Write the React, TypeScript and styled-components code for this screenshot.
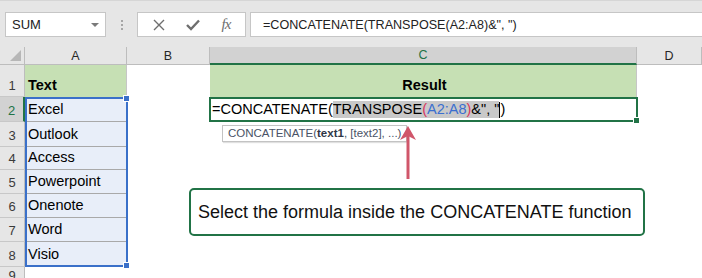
import React from "react";
import styled, { createGlobalStyle } from "styled-components";

const GlobalStyle = createGlobalStyle`
  html, body {
    margin: 0;
    padding: 0;
    background: #ffffff;
    overflow: hidden;
  }
`;

const Page = styled.div`
  position: relative;
  width: 702px;
  height: 278px;
  overflow: hidden;
  font-family: "Liberation Sans", Arial, sans-serif;
`;

const Toolbar = styled.div`
  height: 47px;
  box-sizing: border-box;
  padding-top: 11px;
  background: #e6e6e6;
  border-top: 1px solid #d6d6d6;
  display: flex;
  align-items: flex-start;
`;

const Box = styled.div`
  height: 25px;
  box-sizing: border-box;
  background: #ffffff;
  border: 1px solid #c6c6c6;
  display: flex;
  align-items: center;
`;

const NameBox = styled(Box)`
  margin-left: 5px;
  width: 101px;
  padding: 0 6px;
  justify-content: space-between;
  font-size: 13px;
  color: #222;
`;

const Caret = styled.span`
  width: 0;
  height: 0;
  border-left: 4px solid transparent;
  border-right: 4px solid transparent;
  border-top: 4px solid #7a7a7a;
`;

const Dots = styled.div`
  width: 31px;
  height: 25px;
  display: flex;
  flex-direction: column;
  align-items: center;
  justify-content: center;
  gap: 2px;

  span {
    width: 2px;
    height: 2px;
    background: #a6a6a6;
  }
`;

const FxGroup = styled(Box)`
  width: 109px;
  justify-content: space-around;
  padding: 0 4px;
`;

const FxText = styled.span`
  font-family: "Liberation Serif", "Times New Roman", serif;
  font-style: italic;
  font-size: 15px;
  color: #6e6e6e;
  letter-spacing: -1px;
`;

const FormulaBar = styled(Box)`
  margin-left: 4px;
  flex: 1;
  border-right: none;
  padding-left: 12px;
  font-size: 12.6px;
  color: #222;
`;

const Sheet = styled.div`
  display: grid;
  grid-template-columns: 25px 102px 83px 427px 65px;
  grid-template-rows: 18px 32px 25px 25px 23px 24px 24px 24px 25px 20px;
  position: relative;
`;

const Corner = styled.div`
  background: #e6e6e6;
  border-right: 1px solid #bdbdbd;
  border-bottom: 1px solid #bdbdbd;
  position: relative;

  &::after {
    content: "";
    position: absolute;
    right: 3px;
    bottom: 3px;
    width: 0;
    height: 0;
    border-left: 11px solid transparent;
    border-bottom: 11px solid #b7b7b7;
  }
`;

const ColHead = styled.div<{ $active?: boolean }>`
  background: ${(p) => (p.$active ? "#d2d2d2" : "#e6e6e6")};
  border-right: 1px solid #bdbdbd;
  border-bottom: ${(p) => (p.$active ? "2px solid #217346" : "1px solid #bdbdbd")};
  display: flex;
  align-items: center;
  justify-content: center;
  font-size: 12.5px;
  color: ${(p) => (p.$active ? "#217346" : "#262626")};
`;

const RowHead = styled.div<{ $active?: boolean }>`
  background: ${(p) => (p.$active ? "#d2d2d2" : "#e6e6e6")};
  border-right: ${(p) => (p.$active ? "2px solid #217346" : "1px solid #bdbdbd")};
  border-bottom: 1px solid #c8c8c8;
  display: flex;
  align-items: flex-end;
  justify-content: center;
  padding-bottom: 3px;
  box-sizing: border-box;
  font-size: 13px;
  color: ${(p) => (p.$active ? "#217346" : "#3a3a3a")};
`;

const Cell = styled.div<{
  $fill?: string;
  $bold?: boolean;
  $center?: boolean;
  $line?: string;
  $side?: string;
}>`
  background: ${(p) => p.$fill || "#ffffff"};
  border-bottom: ${(p) => (p.$line ? `1px solid ${p.$line}` : "none")};
  border-right: ${(p) => (p.$side ? `1px solid ${p.$side}` : "none")};
  box-sizing: border-box;
  display: flex;
  align-items: flex-end;
  justify-content: ${(p) => (p.$center ? "center" : "flex-start")};
  padding: 0 0 3px 3px;
  font-size: 14.5px;
  line-height: 17px;
  font-weight: ${(p) => (p.$bold ? 700 : 400)};
  color: #000;
  white-space: nowrap;
`;

const ActiveCell = styled.div`
  border: 2px solid #217346;
  box-sizing: border-box;
  margin-left: -1px;
  margin-right: -1px;
  display: flex;
  align-items: flex-end;
  padding: 0 0 2px 1px;
  font-size: 14.5px;
  line-height: 17px;
  white-space: nowrap;
  position: relative;
  z-index: 2;

  &::after {
    content: "";
    position: absolute;
    right: -4px;
    bottom: -4px;
    width: 5px;
    height: 5px;
    background: #217346;
    border: 1px solid #ffffff;
  }
`;

const Hi = styled.span`
  background: #c9c9c9;
`;

const Paren = styled.span`
  color: #d9335e;
`;

const Ref = styled.span`
  color: #3a6fd0;
`;

const Caret2 = styled.span`
  display: inline-block;
  width: 1px;
  height: 16px;
  background: #000;
  vertical-align: -3px;
`;

const Selection = styled.div`
  position: absolute;
  left: 25px;
  top: 50px;
  width: 103px;
  height: 170px;
  box-sizing: border-box;
  border: 2px solid #3a70c9;
  pointer-events: none;
`;

const Handle = styled.span<{ $x: "l" | "r"; $y: "t" | "b" }>`
  position: absolute;
  width: 5px;
  height: 5px;
  background: #3a70c9;
  border: 1px solid #ffffff;
  ${(p) => (p.$x === "l" ? "left: -4px;" : "right: -4px;")}
  ${(p) => (p.$y === "t" ? "top: -4px;" : "bottom: -4px;")}
`;

const Tooltip = styled.div`
  position: absolute;
  left: 222px;
  top: 125px;
  height: 17px;
  box-sizing: border-box;
  padding: 0 5px;
  background: #ffffff;
  border: 1px solid #c3c3c3;
  box-shadow: 1px 1px 1px rgba(0, 0, 0, 0.12);
  font-size: 11.5px;
  line-height: 15px;
  color: #4a5366;
  white-space: nowrap;
  z-index: 3;

  b {
    color: #2f3645;
  }
`;

const Arrow = styled.svg`
  position: absolute;
  left: 399px;
  top: 125px;
  z-index: 4;
`;

const Callout = styled.div`
  position: absolute;
  left: 189px;
  top: 188px;
  width: 456px;
  height: 48px;
  box-sizing: border-box;
  border: 2px solid #217346;
  border-radius: 5px;
  background: #ffffff;
  display: flex;
  align-items: center;
  padding-left: 7px;
  font-size: 18px;
  color: #111;
  white-space: nowrap;
`;

const items = ["Excel", "Outlook", "Access", "Powerpoint", "Onenote", "Word", "Visio"];

export default function App() {
  return (
    <Page>
      <GlobalStyle />
      <Toolbar>
        <NameBox>
          <span>SUM</span>
          <Caret />
        </NameBox>
        <Dots>
          <span />
          <span />
          <span />
        </Dots>
        <FxGroup>
          <svg width="12" height="12" viewBox="0 0 12 12">
            <path d="M1 1 L11 11 M11 1 L1 11" stroke="#6e6e6e" strokeWidth="1.4" fill="none" />
          </svg>
          <svg width="14" height="12" viewBox="0 0 14 12">
            <path d="M1 6 L5 10 L13 1.5" stroke="#6e6e6e" strokeWidth="2.4" fill="none" />
          </svg>
          <FxText>fx</FxText>
        </FxGroup>
        <FormulaBar>=CONCATENATE(TRANSPOSE(A2:A8)&amp;", ")</FormulaBar>
      </Toolbar>

      <Sheet>
        <Corner />
        <ColHead>A</ColHead>
        <ColHead>B</ColHead>
        <ColHead $active>C</ColHead>
        <ColHead>D</ColHead>

        <RowHead>1</RowHead>
        <Cell $fill="#c6e0b4" $bold $side="#c6c6c6">
          Text
        </Cell>
        <Cell />
        <Cell $fill="#c6e0b4" $bold $center $side="#c6c6c6">
          Result
        </Cell>
        <Cell />

        {items.map((name, i) => (
          <React.Fragment key={name}>
            <RowHead $active={i === 0}>{i + 2}</RowHead>
            <Cell $fill="#e8eef9" $line="#a9a9a9">
              {name}
            </Cell>
            <Cell />
            {i === 0 ? (
              <ActiveCell>
                =CONCATENATE(
                <Hi>
                  TRANSPOSE<Paren>(</Paren>
                  <Ref>A2:A8</Ref>
                  <Paren>)</Paren>&amp;", "
                </Hi>
                <Caret2 />)
              </ActiveCell>
            ) : (
              <Cell />
            )}
            <Cell />
          </React.Fragment>
        ))}

        <RowHead>9</RowHead>
        <Cell />
        <Cell />
        <Cell />
        <Cell />

        <Selection>
          <Handle $x="r" $y="t" />
          <Handle $x="r" $y="b" />
        </Selection>
      </Sheet>

      <Tooltip>
        CONCATENATE(<b>text1</b>, [text2], ...)
      </Tooltip>

      <Arrow width="18" height="56" viewBox="0 0 18 56">
        <line x1="9" y1="10" x2="9" y2="54" stroke="#d0566a" strokeWidth="3" />
        <path d="M9 1 L17 15 L9 11 L1 15 Z" fill="#d0566a" />
      </Arrow>

      <Callout>Select the formula inside the CONCATENATE function</Callout>
    </Page>
  );
}
